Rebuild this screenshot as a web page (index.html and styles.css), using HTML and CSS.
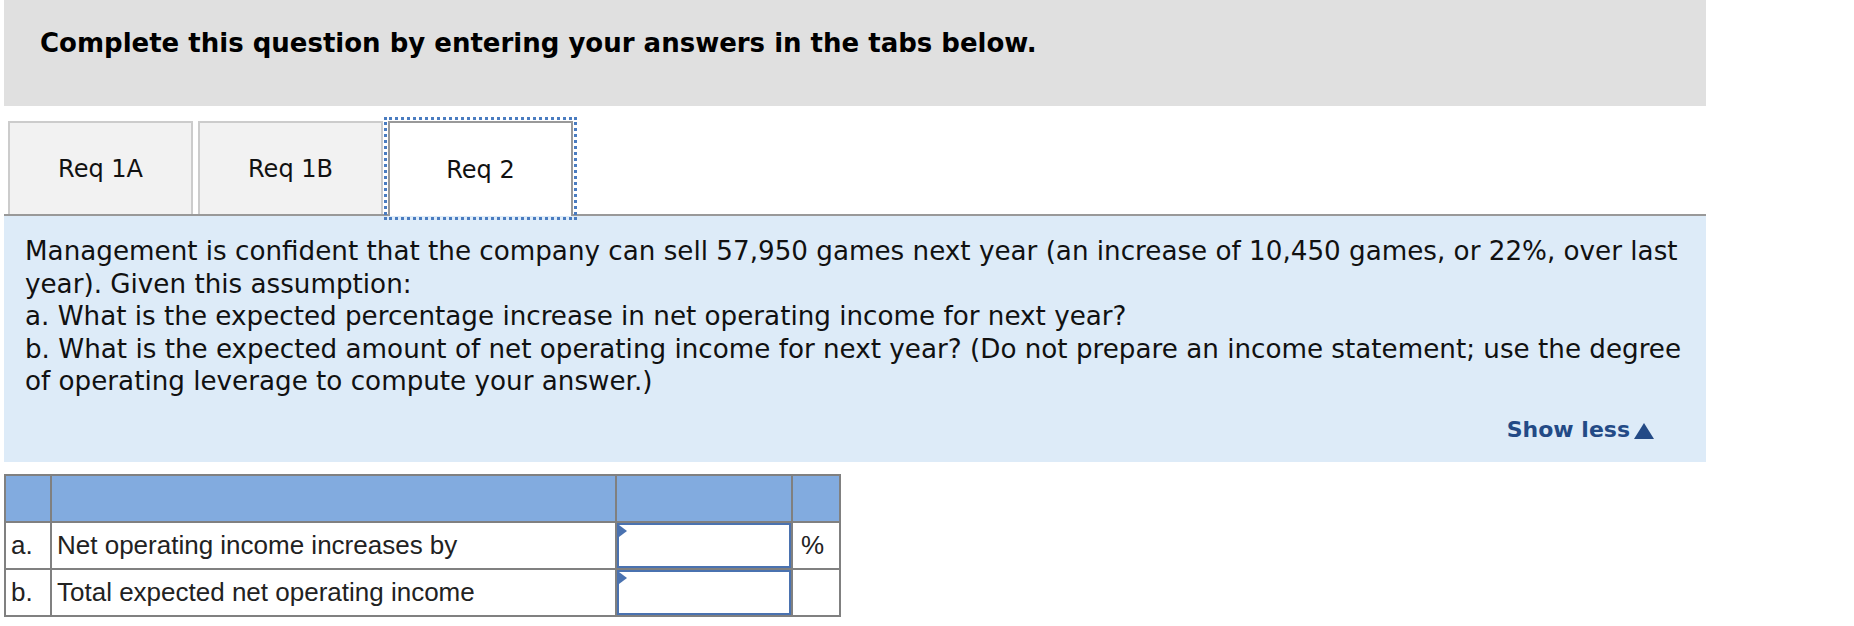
FILE: index.html
```html
<!DOCTYPE html>
<html>
<head>
<meta charset="utf-8">
<link rel="stylesheet" href="styles.css">
</head>
<body>
<div class="page">
  <div class="header">
    <h1 class="header-title">Complete this question by entering your answers in the tabs below.</h1>
  </div>
  <div class="tabs">
    <div class="tab">Req 1A</div>
    <div class="tab">Req 1B</div>
    <div class="tab tab-active">Req 2</div>
  </div>
  <div class="question">
    <p class="question-text">Management is confident that the company can sell 57,950 games next year (an increase of 10,450 games, or 22%, over last year). Given this assumption:<br>a. What is the expected percentage increase in net operating income for next year?<br>b. What is the expected amount of net operating income for next year? (Do not prepare an income statement; use the degree of operating leverage to compute your answer.)</p>
    <div class="show-less">Show less<span class="arrow"></span></div>
  </div>
  <table class="answer-table">
    <tr class="head-row">
      <td class="c1"></td><td class="c2"></td><td class="c3"></td><td class="c4"></td>
    </tr>
    <tr>
      <td class="c1">a.</td>
      <td class="c2">Net operating income increases by</td>
      <td class="c3"><div class="input"><span class="marker"></span></div></td>
      <td class="c4">%</td>
    </tr>
    <tr>
      <td class="c1">b.</td>
      <td class="c2">Total expected net operating income</td>
      <td class="c3"><div class="input"><span class="marker"></span></div></td>
      <td class="c4"></td>
    </tr>
  </table>
</div>
</body>
</html>
```

FILE: styles.css
```css
html, body {
  margin: 0;
  padding: 0;
  background: #ffffff;
}

.page {
  padding-left: 4px;
  width: 1702px;
  font-family: "DejaVu Sans", Verdana, sans-serif;
  color: #111;
}

.header {
  background: #e0e0e0;
  height: 106px;
  padding-left: 36px;
  box-sizing: border-box;
  padding-top: 28px;
}

.header-title {
  margin: 0;
  font-size: 26px;
  font-weight: bold;
  line-height: 30px;
  color: #000;
}

.tabs {
  display: flex;
  gap: 5px;
  margin-top: 15px;
  padding-left: 4px;
  border-bottom: 2px solid #999;
  height: 93px;
}

.tab {
  width: 185px;
  height: 93px;
  box-sizing: border-box;
  border: 2px solid #cccccc;
  border-bottom: none;
  background: #f2f2f2;
  display: flex;
  align-items: center;
  justify-content: center;
  font-size: 24px;
  color: #111;
}

.tab-active {
  background: #ffffff;
  border-color: #999999;
  outline: 3px dotted #4a7cc0;
  outline-offset: 1px;
  position: relative;
  z-index: 1;
  height: 95px;
}

.question {
  background: #ddebf8;
  height: 246px;
  box-sizing: border-box;
  padding: 19px 21px 19px 21px;
  display: flex;
  flex-direction: column;
}

.question-text {
  margin: 0;
  font-size: 26.2px;
  line-height: 32.5px;
  color: #111;
}

.show-less {
  margin-top: auto;
  align-self: flex-end;
  margin-right: 31px;
  font-weight: bold;
  font-size: 22px;
  line-height: 26px;
  color: #234a86;
}

.arrow {
  display: inline-block;
  width: 0;
  height: 0;
  margin-left: 4px;
  border-left: 10px solid transparent;
  border-right: 10px solid transparent;
  border-bottom: 16px solid #234a86;
  vertical-align: -2px;
}

.answer-table {
  margin-top: 12px;
  border-collapse: collapse;
  font-family: "Liberation Sans", Arial, sans-serif;
  font-size: 26px;
  color: #222;
}

.answer-table td {
  border: 2px solid #808080;
  height: 45px;
  padding: 0;
  white-space: nowrap;
}

.head-row td {
  background: #82abdf;
}

.c1 { width: 39px; padding-left: 5px !important; }
.c2 { width: 558px; padding-left: 5px !important; }
.c3 { width: 174px; }
.c4 { width: 38px; padding-left: 8px !important; }

.input {
  position: relative;
  height: 45px;
  box-sizing: border-box;
  border: 2px solid #4a72b0;
  background: #fff;
}

.marker {
  position: absolute;
  left: 0;
  top: 0;
  width: 0;
  height: 0;
  border-top: 6px solid transparent;
  border-bottom: 6px solid transparent;
  border-left: 8px solid #4a72b0;
}
```
